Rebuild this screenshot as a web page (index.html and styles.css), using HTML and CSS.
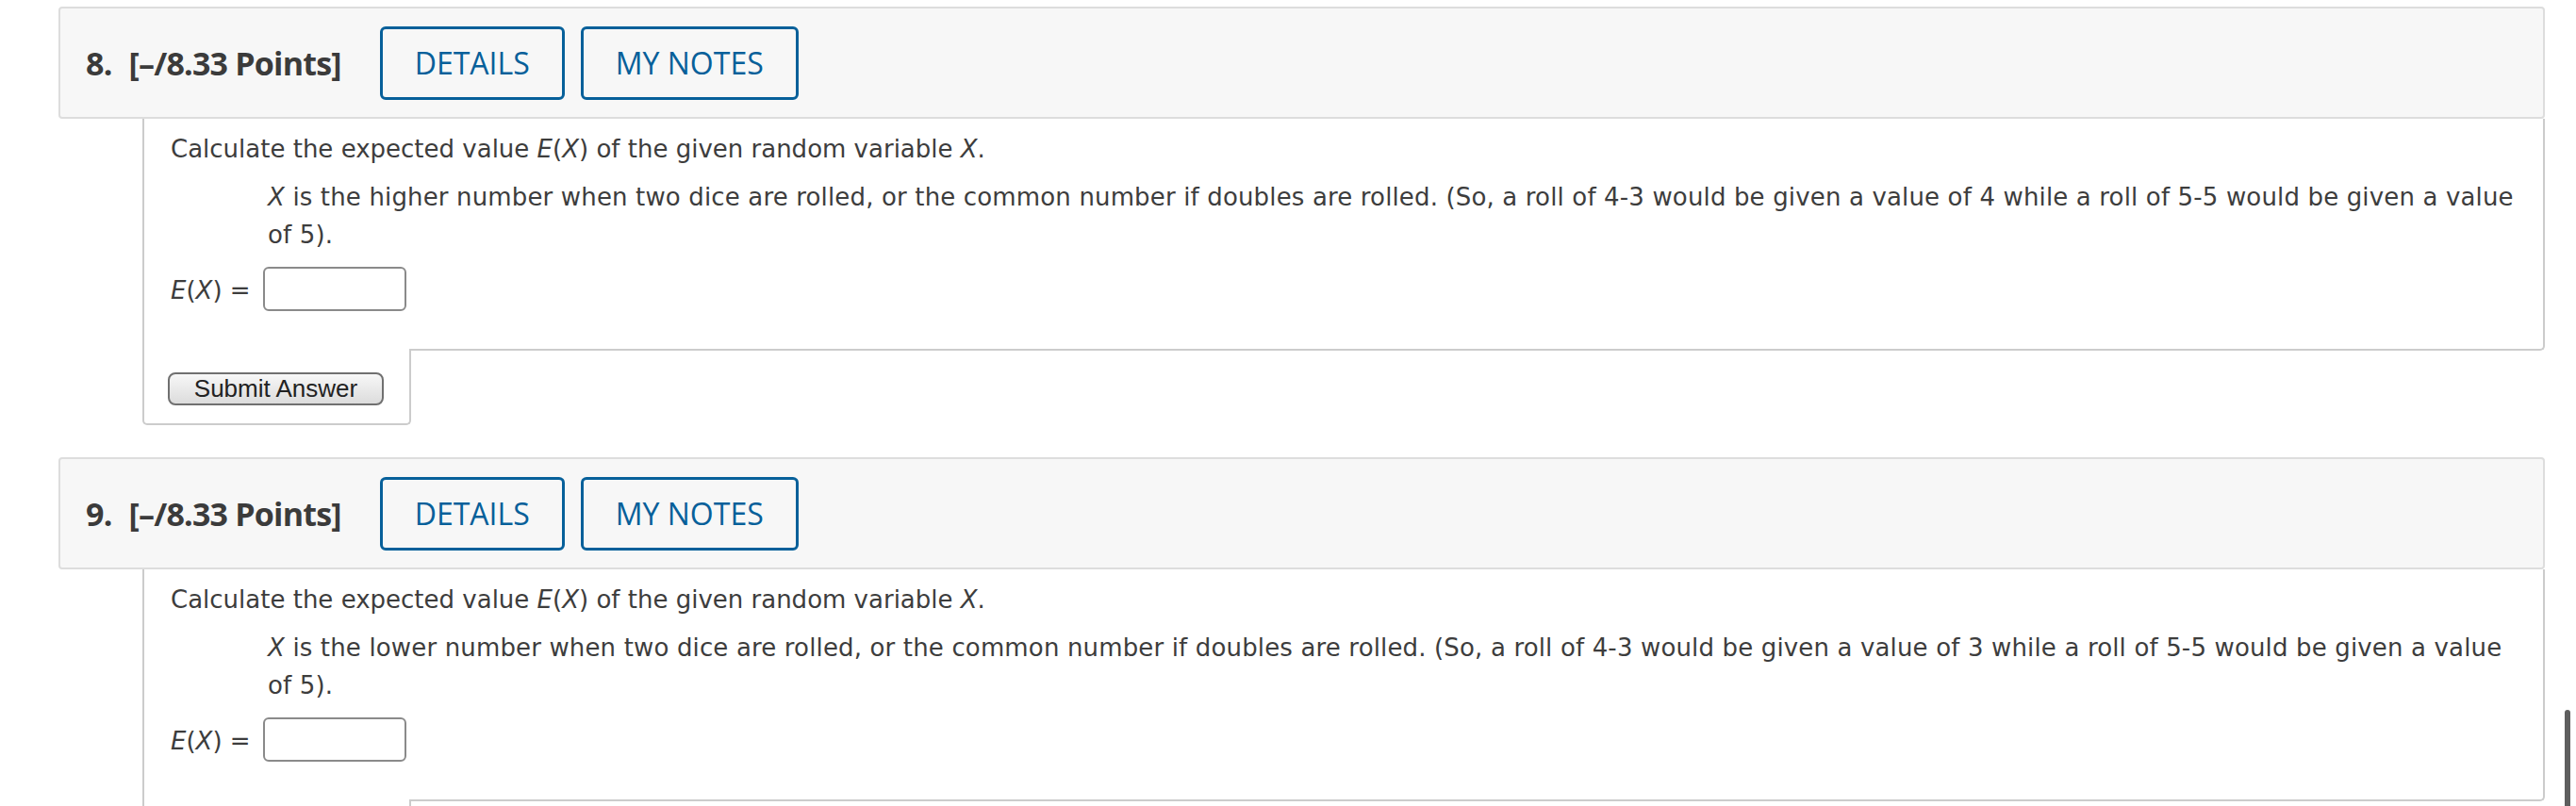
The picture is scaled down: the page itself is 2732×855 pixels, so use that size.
FILE: index.html
```html
<!DOCTYPE html>
<html lang="en">
<head>
<meta charset="utf-8">
<title>Questions</title>
<link rel="stylesheet" href="styles.css">
</head>
<body>
<div class="page">
  <section class="question">
    <div class="q-header">
      <span class="q-num">8.</span>
      <span class="q-points">[–/8.33 Points]</span>
      <div class="q-actions">
        <button class="q-btn" type="button">DETAILS</button>
        <button class="q-btn" type="button">MY NOTES</button>
      </div>
    </div>
    <div class="q-body">
      <div class="q-content">
        <p class="q-lead">Calculate the expected value <i>E</i>(<i>X</i>) of the given random variable <i>X</i>.</p>
        <p class="q-desc"><i>X</i> is the higher number when two dice are rolled, or the common number if doubles are rolled. (So, a roll of 4-3 would be given a value of 4 while a roll of 5-5 would be given a value of 5).</p>
        <div class="q-answer">
          <span class="q-label"><i>E</i>(<i>X</i>) =</span>
          <input class="q-input" type="text" aria-label="E(X)">
        </div>
      </div>
      <div class="q-submit">
        <button class="submit-btn" type="button">Submit Answer</button>
      </div>
    </div>
  </section>

  <section class="question">
    <div class="q-header">
      <span class="q-num">9.</span>
      <span class="q-points">[–/8.33 Points]</span>
      <div class="q-actions">
        <button class="q-btn" type="button">DETAILS</button>
        <button class="q-btn" type="button">MY NOTES</button>
      </div>
    </div>
    <div class="q-body">
      <div class="q-content">
        <p class="q-lead">Calculate the expected value <i>E</i>(<i>X</i>) of the given random variable <i>X</i>.</p>
        <p class="q-desc"><i>X</i> is the lower number when two dice are rolled, or the common number if doubles are rolled. (So, a roll of 4-3 would be given a value of 3 while a roll of 5-5 would be given a value of 5).</p>
        <div class="q-answer">
          <span class="q-label"><i>E</i>(<i>X</i>) =</span>
          <input class="q-input" type="text" aria-label="E(X)">
        </div>
      </div>
      <div class="q-submit">
        <button class="submit-btn" type="button">Submit Answer</button>
      </div>
    </div>
  </section>
</div>
<div class="scroll-thumb"></div>
</body>
</html>
```

FILE: styles.css
```css
html, body {
  margin: 0;
  padding: 0;
  overflow: hidden;
  background: #ffffff;
}

.page {
  padding: 7px 33px 0 62px;
}

.question {
  margin-bottom: 34px;
}

.q-header {
  display: flex;
  align-items: center;
  height: 115px;
  padding-left: 27px;
  background: #f7f7f7;
  border: 2px solid #dddddd;
  border-radius: 4px;
  font-family: "Open Sans", "Noto Sans", sans-serif;
  color: #3b3b3b;
}

.q-num {
  font-weight: 700;
  font-size: 34px;
  letter-spacing: -0.8px;
  margin-right: 18px;
}

.q-points {
  font-weight: 700;
  font-size: 34px;
  letter-spacing: -0.8px;
  margin-right: 41px;
}

.q-actions {
  display: flex;
  gap: 17px;
}

.q-btn {
  font-family: "Open Sans", "Noto Sans", sans-serif;
  font-size: 32px;
  font-weight: 400;
  color: #07609a;
  background: transparent;
  border: 3px solid #07609a;
  border-radius: 6px;
  height: 78px;
  padding: 0 34px;
  line-height: 72px;
  margin: 0;
}

.q-body {
  margin-left: 89px;
}

.q-content {
  border-left: 2px solid #cccccc;
  border-right: 2px solid #cccccc;
  border-bottom: 2px solid #cccccc;
  border-bottom-right-radius: 5px;
  padding: 12px 20px 40px 28px;
  font-family: "DejaVu Sans", Verdana, sans-serif;
  font-size: 26px;
  line-height: 40px;
  color: #3d3d3d;
}

.q-content p {
  margin: 0;
}

.q-lead {
  margin-bottom: 11px !important;
}

.q-desc {
  padding-left: 103px;
  letter-spacing: 0.15px;
}

.q-answer {
  display: flex;
  align-items: center;
  gap: 13px;
  margin-top: 14px;
}

.q-label {
  padding-top: 3px;
}

.q-input {
  width: 152px;
  height: 47px;
  box-sizing: border-box;
  border: 2px solid #8a8a8a;
  border-radius: 6px;
  margin: 0;
  padding: 0 8px;
  font-size: 26px;
  background: #ffffff;
}

.q-submit {
  margin-top: -2px;
  background: #ffffff;
  border-left: 2px solid #cccccc;
  border-right: 2px solid #cccccc;
  border-bottom: 2px solid #cccccc;
  border-radius: 0 0 5px 5px;
  padding: 25px 0 19px 25px;
  box-sizing: border-box;
  width: 285px;
}

.submit-btn {
  font-family: "Liberation Sans", Arial, sans-serif;
  font-size: 26px;
  color: #222222;
  height: 35px;
  width: 229px;
  padding: 0;
  line-height: 31px;
  background: linear-gradient(#f7f7f7, #dcdcdc);
  border: 2px solid #707070;
  border-radius: 8px;
  margin: 0;
  display: block;
}

.scroll-thumb {
  position: fixed;
  left: 2720px;
  top: 753px;
  width: 6px;
  height: 110px;
  background: #5e5e5e;
  border-radius: 3px;
}
```
